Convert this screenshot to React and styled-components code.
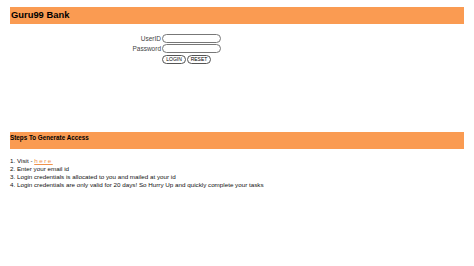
import React from 'react';
import styled, { createGlobalStyle } from 'styled-components';

const GlobalStyle = createGlobalStyle`
  body {
    margin: 0;
    background: #fff;
    font-family: "Liberation Sans", Arial, sans-serif;
    color: #000;
  }
`;

const Page = styled.div`
  padding: 7px 10px;
`;

const Bar = styled.div`
  background: #fa9b52;
  height: ${(props) => props.height}px;
  padding: ${(props) => props.pad};
  box-sizing: border-box;
`;

const Title = styled.h2`
  margin: 0;
  font-size: 9.4px;
  line-height: 11px;
  font-weight: bold;
`;

const SubTitle = styled.h3`
  margin: 0;
  font-size: 6.3px;
  line-height: 8px;
  font-weight: bold;
`;

const Form = styled.div`
  display: grid;
  grid-template-columns: 151px auto;
  column-gap: 1px;
  row-gap: 1px;
  margin-top: 10px;
  align-items: center;
`;

const Label = styled.label`
  text-align: right;
  font-size: 6.5px;
  color: #444;
  line-height: 9px;
`;

const Input = styled.input`
  width: 59px;
  height: 9px;
  box-sizing: border-box;
  border: 1px solid #777;
  border-radius: 5px;
  padding: 0;
  margin: 0;
  background: #fff;
`;

const Buttons = styled.div`
  grid-column: 2;
  display: flex;
  gap: 1px;
  margin-top: 1px;
`;

const Button = styled.button`
  width: 24px;
  height: 9px;
  box-sizing: border-box;
  border: 1px solid #555;
  border-radius: 5px;
  background: #fff;
  font-family: "Liberation Sans", Arial, sans-serif;
  font-size: 5px;
  padding: 0;
  margin: 0;
  line-height: 7px;
  color: #000;
`;

const Steps = styled.div`
  margin-top: 68px;
`;

const List = styled.div`
  margin-top: 8px;
  font-size: 6.25px;
  line-height: 8px;
  color: #111;
`;

const Here = styled.a`
  color: #f0914a;
  letter-spacing: 1.5px;
  text-decoration: underline;
`;

export default function App() {
  return (
    <>
      <GlobalStyle />
      <Page>
        <Bar height={17} pad="2px 1px">
          <Title>Guru99 Bank</Title>
        </Bar>
        <Form>
          <Label>UserID</Label>
          <Input type="text" />
          <Label>Password</Label>
          <Input type="password" />
          <Buttons>
            <Button>LOGIN</Button>
            <Button>RESET</Button>
          </Buttons>
        </Form>
        <Steps>
          <Bar height={17} pad="2px 0">
            <SubTitle>Steps To Generate Access</SubTitle>
          </Bar>
          <List>
            <div>
              1. Visit - <Here href="#">here</Here>
            </div>
            <div>2. Enter your email id</div>
            <div>3. Login credentials is allocated to you and mailed at your id</div>
            <div>4. Login credentials are only valid for 20 days! So Hurry Up and quickly complete your tasks</div>
          </List>
        </Steps>
      </Page>
    </>
  );
}
